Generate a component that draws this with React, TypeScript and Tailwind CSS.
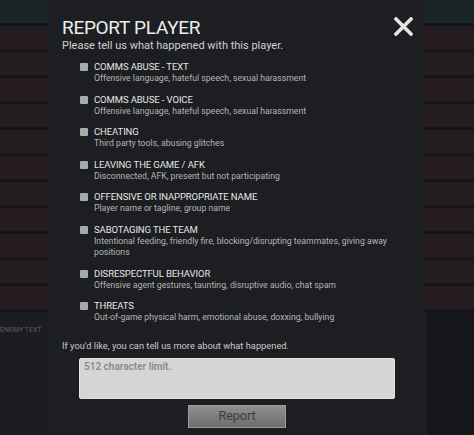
import React from "react";

type Reason = {
    title: string;
    desc: string;
};

const reasons: Reason[] = [
    { title: "COMMS ABUSE - TEXT", desc: "Offensive language, hateful speech, sexual harassment" },
    { title: "COMMS ABUSE - VOICE", desc: "Offensive language, hateful speech, sexual harassment" },
    { title: "CHEATING", desc: "Third party tools, abusing glitches" },
    { title: "LEAVING THE GAME / AFK", desc: "Disconnected, AFK, present but not participating" },
    { title: "OFFENSIVE OR INAPPROPRIATE NAME", desc: "Player name or tagline, group name" },
    {
        title: "SABOTAGING THE TEAM",
        desc: "Intentional feeding, friendly fire, blocking/disrupting teammates, giving away positions",
    },
    { title: "DISRESPECTFUL BEHAVIOR", desc: "Offensive agent gestures, taunting, disruptive audio, chat spam" },
    { title: "THREATS", desc: "Out-of-game physical harm, emotional abuse, doxxing, bullying" },
];

// scoreboard rows peeking out behind the dialog
function ScoreRows({ bottom }: { bottom: React.ReactNode }) {
    return (
        <div className="flex flex-col h-full">
            <div className="h-[23px] shrink-0 bg-[#1a2528]" />
            {Array.from({ length: 11 }).map((_, i) => (
                <div key={i} className="h-[26px] shrink-0 border-t-[3px] border-[#131518] bg-[#251c1f]" />
            ))}
            <div className="flex-1 border-t-[3px] border-[#131518]">{bottom}</div>
        </div>
    );
}

function CloseIcon() {
    return (
        <svg width="19" height="19" viewBox="0 0 19 19" className="block">
            <path d="M2 2 L17 17 M17 2 L2 17" stroke="#e4e4e4" strokeWidth="3.6" strokeLinecap="square" />
        </svg>
    );
}

function ReasonRow({ reason }: { reason: Reason }) {
    return (
        <label className="flex items-start gap-[6px]">
            <span className="mt-[2px] w-[8px] h-[8px] shrink-0 rounded-[1px] bg-[#aaaaaa]" />
            <div className="flex flex-col w-[302px]">
                <span className="text-[9.5px] leading-[12px] tracking-[-0.1px] text-[#e6e6e6]">{reason.title}</span>
                <span className="text-[8.7px] leading-[11.5px] text-[#b5b5b5]">{reason.desc}</span>
            </div>
        </label>
    );
}

export default function App() {
    return (
        <div className="w-[474px] h-[435px] overflow-hidden flex bg-[#1b1d20] font-['Roboto',sans-serif]">
            <div className="w-[48px] shrink-0 h-full overflow-hidden">
                <ScoreRows
                    bottom={
                        <div className="h-full bg-[#1b1d20] pt-[14px] text-[7px] leading-[8px] text-[#5c6065] whitespace-nowrap">
                            ENEMY TEXT
                        </div>
                    }
                />
            </div>

            <div className="w-[376px] shrink-0 h-full bg-[#1c1e21] flex flex-col">
                <div className="flex justify-between pl-[14px] pr-[11px] pt-[17px]">
                    <h1 className="text-[19px] leading-[22px] tracking-[-0.3px] text-[#ededed]">REPORT PLAYER</h1>
                    <CloseIcon />
                </div>
                <p className="pl-[14px] text-[11px] leading-[14px] text-[#d0d0d0]">
                    Please tell us what happened with this player.
                </p>

                <div className="mt-[8px] pl-[32px] flex flex-col gap-[9px]">
                    {reasons.map((r) => (
                        <ReasonRow key={r.title} reason={r} />
                    ))}
                </div>

                <p className="mt-[15px] pl-[14px] text-[9.3px] leading-[14px] text-[#cacaca]">
                    If you'd like, you can tell us more about what happened.
                </p>
                <textarea
                    placeholder="512 character limit."
                    className="mt-[5px] ml-[31px] w-[316px] h-[41px] resize-none rounded-[2px] border border-[#e2e2e2] bg-[#d5d5d5] px-[4px] py-[2px] text-[10px] font-semibold leading-[12px] text-[#333] placeholder:text-[#8a8a8a] outline-none"
                />
                <button className="mt-[6px] ml-[140px] w-[98px] h-[23px] border border-[#9c9c9c] bg-gradient-to-b from-[#8f8f8f] to-[#6d6d6d] text-[12.5px] text-[#3c3c3c]">
                    Report
                </button>
            </div>

            <div className="w-[50px] shrink-0 h-full overflow-hidden">
                <ScoreRows
                    bottom={
                        <div className="h-full flex">
                            <div className="w-[3px] bg-[#1d1f22]" />
                            <div className="w-[1px] bg-[#101214]" />
                            <div className="flex-1 bg-[#15171a]" />
                        </div>
                    }
                />
            </div>
        </div>
    );
}
